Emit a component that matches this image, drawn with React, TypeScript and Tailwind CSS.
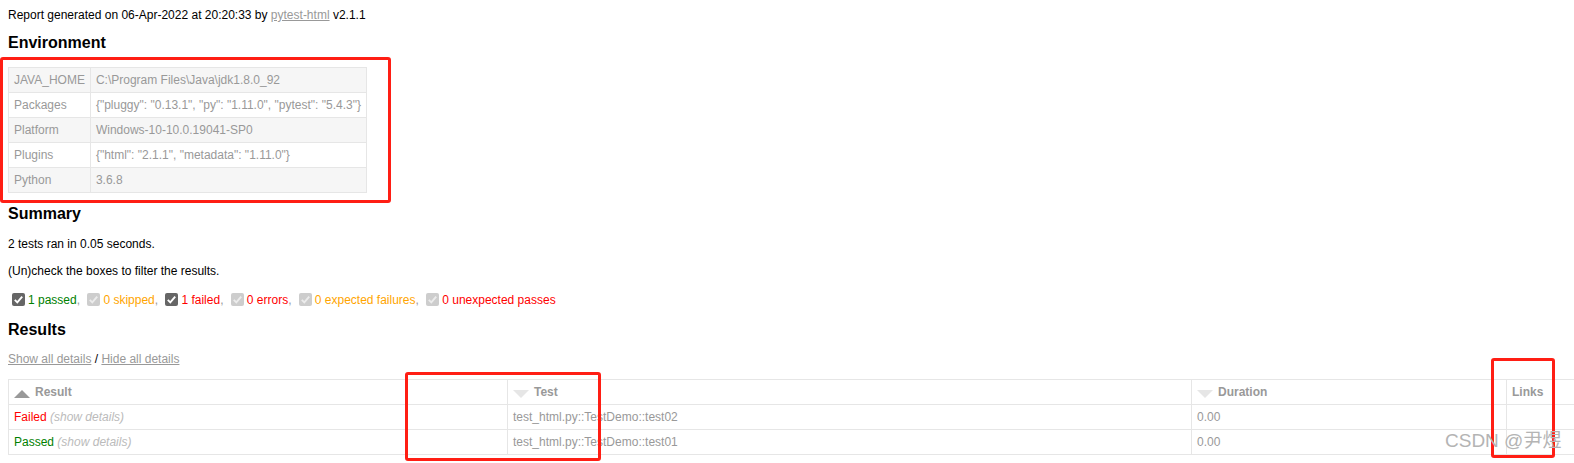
import React from "react";

type EnvRow = { key: string; value: string };

const env: EnvRow[] = [
  { key: "JAVA_HOME", value: "C:\\Program Files\\Java\\jdk1.8.0_92" },
  { key: "Packages", value: '{"pluggy": "0.13.1", "py": "1.11.0", "pytest": "5.4.3"}' },
  { key: "Platform", value: "Windows-10-10.0.19041-SP0" },
  { key: "Plugins", value: '{"html": "2.1.1", "metadata": "1.11.0"}' },
  { key: "Python", value: "3.6.8" },
];

const filters = [
  { label: "1 passed", color: "text-[#008000]", on: true },
  { label: "0 skipped", color: "text-[#ffa500]", on: false },
  { label: "1 failed", color: "text-[#ff0000]", on: true },
  { label: "0 errors", color: "text-[#ff0000]", on: false },
  { label: "0 expected failures", color: "text-[#ffa500]", on: false },
  { label: "0 unexpected passes", color: "text-[#ff0000]", on: false },
];

const results = [
  { result: "Failed", color: "text-[#ff0000]", test: "test_html.py::TestDemo::test02", duration: "0.00" },
  { result: "Passed", color: "text-[#008000]", test: "test_html.py::TestDemo::test01", duration: "0.00" },
];

function Checkbox({ on }: { on: boolean }) {
  return (
    <span
      className={`inline-block w-[13px] h-[13px] rounded-[2px] ml-[4px] mr-[3px] align-[-2px] ${on ? "bg-[#666666]" : "bg-[#cdcdcd]"}`}
    >
      <svg viewBox="0 0 13 13" className="w-[13px] h-[13px] block">
        <path d="M2.8 6.8 L5.3 9.3 L10.2 3.6" fill="none" stroke={on ? "#ffffff" : "#ececec"} strokeWidth={1.9} />
      </svg>
    </span>
  );
}

export default function App() {
  const td = "px-[5px] py-[5px] border border-[#e6e6e6] text-left whitespace-nowrap";
  return (
    <div className="relative w-full h-[463px] overflow-hidden bg-white px-2 pt-2 text-[12px] leading-[14px] text-[#999] font-['Liberation_Sans',Arial,sans-serif]">
      <p className="text-black">
        Report generated on 06-Apr-2022 at 20:20:33 by <a className="text-[#999] underline">pytest-html</a> v2.1.1
      </p>

      <h2 className="mt-3 text-[16px] leading-[18px] font-bold text-black">Environment</h2>
      <table className="mt-[15px] border-collapse">
        <tbody>
          {env.map((r, i) => (
            <tr key={r.key} className={i % 2 === 0 ? "bg-[#f6f6f6]" : ""}>
              <td className={td}>{r.key}</td>
              <td className={td}>{r.value}</td>
            </tr>
          ))}
        </tbody>
      </table>

      <h2 className="mt-3 text-[16px] leading-[18px] font-bold text-black">Summary</h2>
      <p className="mt-[14px] text-black">2 tests ran in 0.05 seconds.</p>
      <p className="mt-[13px] text-black">(Un)check the boxes to filter the results.</p>
      <div className="mt-[15px] whitespace-nowrap">
        {filters.map((f, i) => (
          <React.Fragment key={f.label}>
            <Checkbox on={f.on} />
            <span className={f.color}>{f.label}</span>
            {i < filters.length - 1 && ", "}
          </React.Fragment>
        ))}
      </div>

      <h2 className="mt-[14px] text-[16px] leading-[18px] font-bold text-black">Results</h2>
      <p className="mt-[13px] text-black">
        <a className="text-[#999] underline">Show all details</a> / <a className="text-[#999] underline">Hide all details</a>
      </p>

      <table className="mt-[13px] border-collapse table-fixed w-[1598px]">
        <colgroup>
          <col className="w-[499px]" />
          <col className="w-[684px]" />
          <col className="w-[315px]" />
          <col className="w-[100px]" />
        </colgroup>
        <thead>
          <tr>
            <th className={`${td} font-bold`}>
              <span className="float-left w-0 h-0 mt-[5px] mr-[5px] border-x-[8px] border-x-transparent border-b-[8px] border-b-[#999]" />
              Result
            </th>
            <th className={`${td} font-bold`}>
              <span className="float-left w-0 h-0 mt-[5px] mr-[5px] border-x-[8px] border-x-transparent border-t-[8px] border-t-[#e6e6e6]" />
              Test
            </th>
            <th className={`${td} font-bold`}>
              <span className="float-left w-0 h-0 mt-[5px] mr-[5px] border-x-[8px] border-x-transparent border-t-[8px] border-t-[#e6e6e6]" />
              Duration
            </th>
            <th className={`${td} font-bold`}>Links</th>
          </tr>
        </thead>
        <tbody>
          {results.map((r) => (
            <tr key={r.test}>
              <td className={td}>
                <span className={r.color}>{r.result}</span>
                <span className="italic text-[#bbb]"> (show details)</span>
              </td>
              <td className={td}>{r.test}</td>
              <td className={td}>{r.duration}</td>
              <td className={td}></td>
            </tr>
          ))}
        </tbody>
      </table>

      {/* annotation boxes drawn over the report */}
      <div className="absolute left-0 top-[57px] w-[391px] h-[146px] border-[3px] border-[#ff1e14] rounded-[3px] pointer-events-none" />
      <div className="absolute left-[405px] top-[372px] w-[196px] h-[89px] border-[3px] border-[#ff1e14] rounded-[3px] pointer-events-none" />
      <div className="absolute left-[1491px] top-[358px] w-[64px] h-[100px] border-[3px] border-[#ff1e14] rounded-[3px] pointer-events-none" />

      <div className="absolute left-[1445px] top-[429px] text-[19px] leading-[24px] text-[#b4b4b4] whitespace-nowrap font-['Liberation_Sans','Noto_Sans_CJK_SC',sans-serif]">
        CSDN @尹煜
      </div>
    </div>
  );
}
